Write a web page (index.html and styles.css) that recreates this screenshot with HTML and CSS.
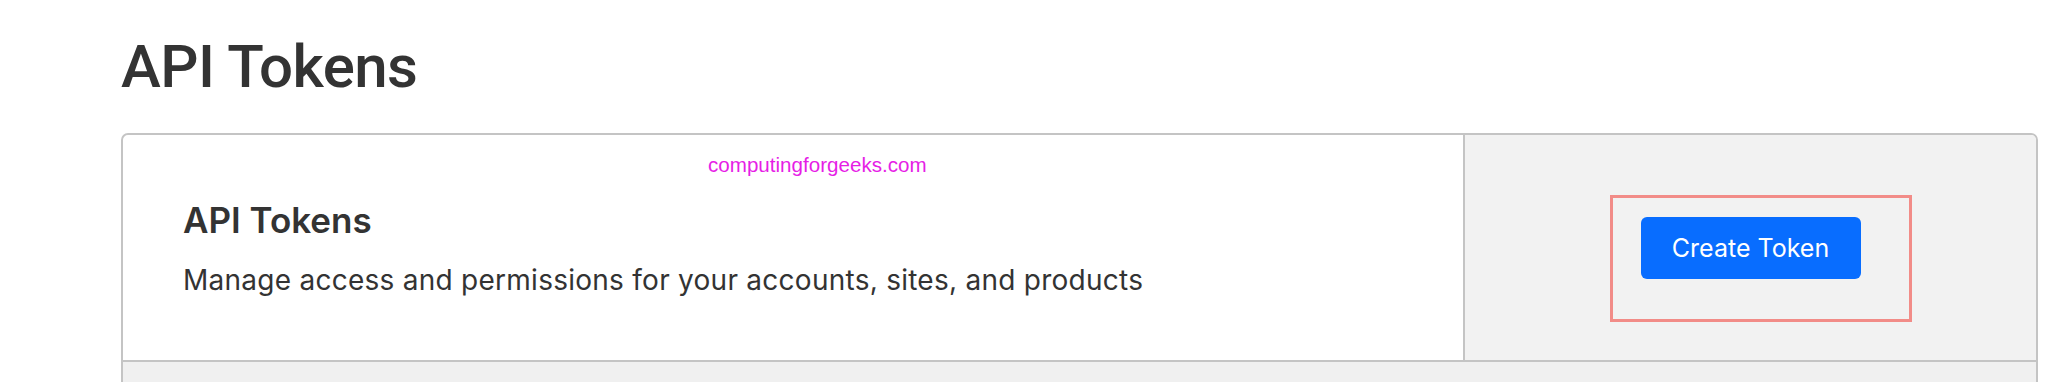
FILE: index.html
```html
<!DOCTYPE html>
<html lang="en">
<head>
<meta charset="utf-8">
<title>API Tokens</title>
<link rel="stylesheet" href="styles.css">
</head>
<body>
<main class="page">
  <h1 class="page-title">API Tokens</h1>
  <section class="card">
    <div class="card-row">
      <div class="card-info">
        <span class="watermark">computingforgeeks.com</span>
        <h2 class="card-title">API Tokens</h2>
        <p class="card-desc">Manage access and permissions for your accounts, sites, and products</p>
      </div>
      <div class="card-action">
        <span class="highlight"></span>
        <button class="btn-primary" type="button">Create Token</button>
      </div>
    </div>
    <div class="card-foot"></div>
  </section>
</main>
</body>
</html>
```

FILE: styles.css
```css
html, body {
  margin: 0;
  padding: 0;
  background: #ffffff;
}

body {
  font-family: Inter, "Noto Sans", sans-serif;
  color: #333333;
  overflow: hidden;
}

.page {
  padding: 0 10px 0 121px;
}

.page-title {
  margin: 0;
  padding: 31px 0 30px;
  font-family: Roboto, "Liberation Sans", sans-serif;
  font-weight: 500;
  font-size: 60px;
  line-height: 72px;
  letter-spacing: -0.6px;
  color: #333333;
}

.card {
  border: 2px solid #c4c4c4;
  border-radius: 7px;
  overflow: hidden;
}

.card-row {
  display: grid;
  grid-template-columns: 1fr 573px;
  border-bottom: 2px solid #c4c4c4;
}

.card-info {
  position: relative;
  padding: 64px 60px 63px;
  display: flex;
  flex-direction: column;
  gap: 22px;
}

.watermark {
  position: absolute;
  left: 585px;
  top: 18px;
  font-family: "Liberation Sans", Arial, sans-serif;
  font-size: 20.6px;
  line-height: 23px;
  color: #e61ee6;
}

.card-title {
  margin: 0;
  font-weight: 600;
  font-size: 35px;
  line-height: 42px;
  color: #333333;
}

.card-desc {
  margin: 0;
  font-weight: 400;
  font-size: 28px;
  line-height: 34px;
  letter-spacing: 0.26px;
  color: #333333;
}

.card-action {
  position: relative;
  background: #f2f2f2;
  border-left: 2px solid #c4c4c4;
  display: flex;
  align-items: center;
  justify-content: center;
}

.btn-primary {
  border: 0;
  border-radius: 6px;
  background: #086dff;
  color: #ffffff;
  font-family: Inter, "Noto Sans", sans-serif;
  font-size: 25px;
  line-height: 30px;
  font-weight: 400;
  width: 220px;
  height: 62px;
  padding: 0;
}

.highlight {
  position: absolute;
  left: 145px;
  top: 60px;
  width: 296px;
  height: 121px;
  border: 3px solid #f28c88;
}

.card-foot {
  height: 80px;
  background: #f0f0f0;
}
```
